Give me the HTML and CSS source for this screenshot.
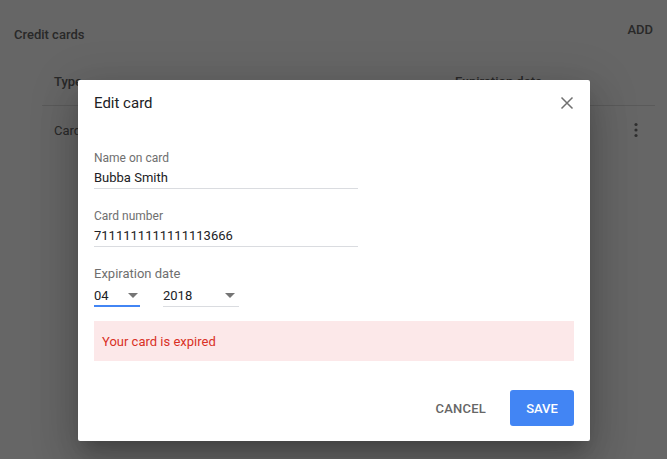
FILE: index.html
```
<!DOCTYPE html>
<html>
<head>
<meta charset="utf-8">
<link rel="stylesheet" href="styles.css">
</head>
<body>
<div class="page">
  <div class="section-head">
    <span class="section-title">Credit cards</span>
    <span class="add">ADD</span>
  </div>
  <div class="table">
    <div class="trow thead">
      <span class="col-type">Type</span>
      <span class="col-exp">Expiration date</span>
    </div>
    <div class="trow tbody">
      <span class="col-type">Card</span>
      <span class="col-exp"></span>
      <svg class="kebab" width="4" height="16" viewBox="0 0 4 16"><circle cx="2" cy="2.5" r="1.6"/><circle cx="2" cy="8" r="1.6"/><circle cx="2" cy="13.5" r="1.6"/></svg>
    </div>
  </div>
</div>
<div class="overlay"></div>
<div class="dialog">
  <div class="dialog-head">
    <span class="dialog-title">Edit card</span>
    <svg class="close" width="14" height="14" viewBox="0 0 14 14"><path d="M1.5 1.5 L12.5 12.5 M12.5 1.5 L1.5 12.5"/></svg>
  </div>
  <div class="field">
    <div class="label">Name on card</div>
    <div class="value">Bubba Smith</div>
  </div>
  <div class="field">
    <div class="label">Card number</div>
    <div class="value">7111111111111113666</div>
  </div>
  <div class="exp">
    <div class="label exp-label">Expiration date</div>
    <div class="selects">
      <div class="select focused"><span>04</span><span class="arrow"></span></div>
      <div class="select year"><span>2018</span><span class="arrow"></span></div>
    </div>
  </div>
  <div class="error">Your card is expired</div>
  <div class="actions">
    <span class="cancel">CANCEL</span>
    <span class="save">SAVE</span>
  </div>
</div>
</body>
</html>
```
FILE: styles.css
```
html, body {
  margin: 0;
  padding: 0;
  width: 667px;
  height: 459px;
  overflow: hidden;
  background: #fff;
  font-family: Roboto, "Liberation Sans", sans-serif;
}
.page {
  padding: 0 14px 0 14px;
  color: #666;
}
.section-head {
  display: flex;
  justify-content: space-between;
  align-items: flex-start;
  padding-top: 22px;
  height: 48px;
  box-sizing: border-box;
}
.section-title {
  font-size: 13px;
  font-weight: 500;
  margin-top: 5px;
}
.add {
  font-size: 13px;
  font-weight: 500;
}
.table {
  margin-left: 28px;
  margin-right: -2px;
  margin-top: 24px;
}
.trow {
  display: flex;
  align-items: center;
  font-size: 13px;
}
.thead {
  height: 34px;
  font-weight: 500;
  border-bottom: 1px solid #e0e0e0;
  align-items: flex-start;
  padding-top: 2px;
  box-sizing: border-box;
}
.tbody {
  height: 48px;
}
.col-type {
  width: 401px;
  padding-left: 12px;
}
.col-exp {
  flex: 1;
}
.kebab {
  fill: #777;
  margin-right: 17px;
}
.overlay {
  position: absolute;
  left: 0;
  top: 0;
  width: 667px;
  height: 459px;
  background: rgba(0, 0, 0, 0.6);
}
.dialog {
  position: absolute;
  left: 78px;
  top: 80px;
  width: 512px;
  height: 361px;
  box-sizing: border-box;
  padding: 1px 16px 0 16px;
  background: #fff;
  border-radius: 2px;
  box-shadow: 0 24px 38px 3px rgba(0,0,0,.14), 0 9px 46px 8px rgba(0,0,0,.12), 0 11px 15px -7px rgba(0,0,0,.2);
  color: #202124;
}
.dialog-head {
  height: 44px;
  display: flex;
  align-items: center;
  justify-content: space-between;
}
.dialog-title {
  font-size: 15px;
  color: #202124;
}
.close {
  stroke: #707070;
  stroke-width: 1.5;
  fill: none;
}
.field {
  width: 264px;
  border-bottom: 1px solid #dadce0;
  margin-top: 25px;
}
.field + .field {
  margin-top: 19px;
}
.label {
  font-size: 12px;
  line-height: 16px;
  color: #6f6f6f;
}
.value {
  font-size: 13px;
  line-height: 20px;
  margin-top: 2px;
  color: #202124;
}
.exp {
  margin-top: 19px;
}
.exp-label {
  font-size: 13px;
  line-height: 16px;
}
.selects {
  display: flex;
  gap: 23px;
  margin-top: 3px;
  align-items: flex-start;
}
.select {
  display: flex;
  align-items: center;
  justify-content: space-between;
  height: 20px;
  font-size: 13px;
  color: #202124;
  width: 46px;
  border-bottom: 2px solid #4285f4;
}
.select .arrow {
  width: 0;
  height: 0;
  border-left: 5px solid transparent;
  border-right: 5px solid transparent;
  border-top: 5px solid #757575;
  margin-right: 2px;
}
.select.year {
  width: 76px;
  height: 21px;
  border-bottom: 1px solid #dadce0;
}
.select.year .arrow {
  margin-right: 4px;
}
.error {
  margin-top: 14px;
  height: 40px;
  background: #fce8e9;
  color: #d93025;
  font-size: 13px;
  display: flex;
  align-items: center;
  padding-left: 8px;
}
.actions {
  margin-top: 29px;
  display: flex;
  justify-content: flex-end;
  align-items: center;
  gap: 24px;
}
.cancel {
  font-size: 13px;
  font-weight: 500;
  color: #666;
  letter-spacing: 0.2px;
}
.save {
  width: 64px;
  height: 36px;
  display: flex;
  align-items: center;
  justify-content: center;
  background: #4285f4;
  color: #fff;
  font-size: 13px;
  font-weight: 500;
  border-radius: 3px;
}
```
